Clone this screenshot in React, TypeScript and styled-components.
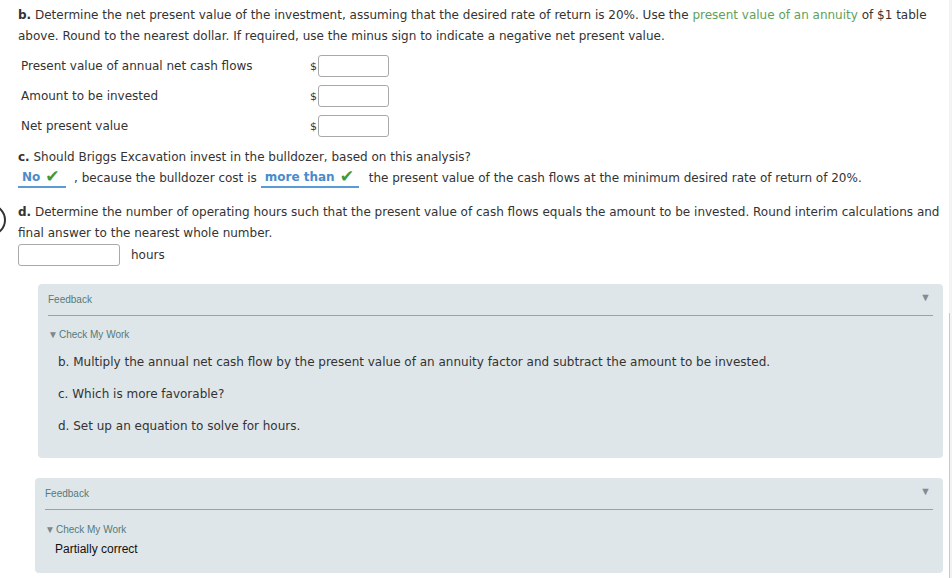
import React from "react";
import styled, { createGlobalStyle } from "styled-components";

const Global = createGlobalStyle`
  html, body { margin: 0; padding: 0; background: #fff; }
  body { font-family: "DejaVu Sans", Verdana, sans-serif; font-size: 12px; color: #333; }
`;

const Page = styled.div`
  display: flex;
  width: 952px;
  height: 578px;
  overflow: hidden;
`;

const Main = styled.div`
  position: relative;
  flex: 1;
  padding: 5px 0 0 18px;
  box-sizing: border-box;
`;

const Scrollbar = styled.div`
  width: 3px;
  background: #f3f3f3;
  display: flex;
  flex-direction: column;
  padding-top: 313px;
  box-sizing: border-box;
`;

const Thumb = styled.div`
  flex: 1;
  border-left: 1px solid #c8c8c8;
`;

const Para = styled.p`
  margin: 0;
  line-height: 21px;
`;

const Link = styled.span`
  color: #5fa15a;
`;

const Rows = styled.div`
  display: flex;
  flex-direction: column;
  margin: 4px 0 6px 3px;
`;

const Row = styled.div`
  display: grid;
  grid-template-columns: 289px 8px 71px;
  align-items: center;
  height: 30px;
`;

const Dollar = styled.span`
  font-size: 11px;
`;

const Input = styled.div<{ $w: number }>`
  width: ${(p) => p.$w}px;
  height: 22px;
  box-sizing: border-box;
  border: 1px solid #a9a9a9;
  border-radius: 3px;
  background: #fff;
`;

const AnswerLine = styled.div`
  display: flex;
  align-items: flex-end;
  height: 20px;
  line-height: 20px;
`;

const Dropdown = styled.span<{ $w: number }>`
  display: inline-flex;
  align-items: center;
  gap: 5px;
  width: ${(p) => p.$w}px;
  box-sizing: border-box;
  padding-left: 4px;
  border-bottom: 2px solid #5b9bd5;
  color: #4a8ccb;
  font-weight: bold;
  height: 21px;
`;

const Check = styled.span`
  color: #3c9a3c;
  font-weight: normal;
  font-size: 17px;
  line-height: 17px;
`;

const Plain = styled.span<{ $pl: number; $pr: number }>`
  padding: 0 ${(p) => p.$pr}px 0 ${(p) => p.$pl}px;
`;

const SectionD = styled.div`
  margin-top: 14px;
  position: relative;
`;

const Badge = styled.div`
  position: absolute;
  left: -44px;
  top: 2px;
  width: 28px;
  height: 28px;
  border: 2px solid #333;
  border-radius: 50%;
`;

const HoursRow = styled.div`
  display: flex;
  align-items: center;
  gap: 11px;
`;

const Panel = styled.div<{ $ml: number; $mt: number; $pb: number }>`
  margin: ${(p) => p.$mt}px 0 0 ${(p) => p.$ml}px;
  width: ${(p) => 943 - 18 - p.$ml}px;
  box-sizing: border-box;
  background: #dfe6e9;
  border-radius: 4px;
  padding: 0 10px ${(p) => p.$pb}px 10px;
  font-family: "Liberation Sans", Arial, sans-serif;
`;

const PanelHead = styled.div`
  display: flex;
  justify-content: space-between;
  align-items: center;
  height: 31px;
  border-bottom: 1px solid #9aa2a5;
  font-size: 10px;
  color: #557a7a;
`;

const Arrow = styled.span`
  color: #858c90;
  font-size: 11px;
  margin-right: 2px;
  margin-top: -5px;
`;

const Toggle = styled.div`
  display: flex;
  align-items: center;
  gap: 1px;
  height: 36px;
  padding-top: 1px;
  box-sizing: border-box;
  font-size: 10px;
  color: #557a7a;
`;

const SmallTri = styled.span`
  color: #7f878a;
  font-size: 10px;
`;

const Hints = styled.div`
  display: flex;
  flex-direction: column;
  padding-left: 10px;
  font-family: "DejaVu Sans", Verdana, sans-serif;
  font-size: 12px;
  color: #333;
`;

const Hint = styled.div`
  height: 32px;
  line-height: 20px;
`;

const Status = styled.div`
  padding-left: 10px;
  margin-top: 2px;
  font-size: 12px;
  color: #111;
  line-height: 14px;
`;

const Toggle2 = styled(Toggle)`
  height: 22px;
  padding-top: 0;
  margin-top: 8px;
`;

function FeedbackPanel({ ml, mt, pb, children, compact }: { ml: number; mt: number; pb: number; children: React.ReactNode; compact?: boolean }) {
  const T = compact ? Toggle2 : Toggle;
  return (
    <Panel $ml={ml} $mt={mt} $pb={pb}>
      <PanelHead>
        <span>Feedback</span>
        <Arrow>▼</Arrow>
      </PanelHead>
      <T>
        <SmallTri>▼</SmallTri>
        <span>Check My Work</span>
      </T>
      {children}
    </Panel>
  );
}

export default function App() {
  return (
    <>
      <Global />
      <Page>
        <Main>
          <Para>
            <b>b.</b> Determine the net present value of the investment, assuming that the desired rate of return is 20%. Use the{" "}
            <Link>present value of an annuity</Link> of $1 table above. Round to the nearest dollar. If required, use the minus sign to indicate a negative net present value.
          </Para>
          <Rows>
            {["Present value of annual net cash flows", "Amount to be invested", "Net present value"].map((l) => (
              <Row key={l}>
                <span>{l}</span>
                <Dollar>$</Dollar>
                <Input $w={71} />
              </Row>
            ))}
          </Rows>
          <Para>
            <b>c.</b> Should Briggs Excavation invest in the bulldozer, based on this analysis?
          </Para>
          <AnswerLine>
            <Dropdown $w={48}>
              No <Check>✔</Check>
            </Dropdown>
            <Plain $pl={8} $pr={4}>, because the bulldozer cost is</Plain>
            <Dropdown $w={98}>
              more than <Check>✔</Check>
            </Dropdown>
            <Plain $pl={10} $pr={0}>the present value of the cash flows at the minimum desired rate of return of 20%.</Plain>
          </AnswerLine>
          <SectionD>
            <Badge />
            <Para>
              <b>d.</b> Determine the number of operating hours such that the present value of cash flows equals the amount to be invested. Round interim calculations and final answer to the nearest whole number.
            </Para>
            <HoursRow>
              <Input $w={102} />
              <span>hours</span>
            </HoursRow>
          </SectionD>
          <FeedbackPanel ml={20} mt={18} pb={10}>
            <Hints>
              <Hint>b. Multiply the annual net cash flow by the present value of an annuity factor and subtract the amount to be invested.</Hint>
              <Hint>c. Which is more favorable?</Hint>
              <Hint>d. Set up an equation to solve for hours.</Hint>
            </Hints>
          </FeedbackPanel>
          <FeedbackPanel ml={17} mt={20} pb={17} compact>
            <Status>Partially correct</Status>
          </FeedbackPanel>
        </Main>
        <Scrollbar>
          <Thumb />
        </Scrollbar>
      </Page>
    </>
  );
}
